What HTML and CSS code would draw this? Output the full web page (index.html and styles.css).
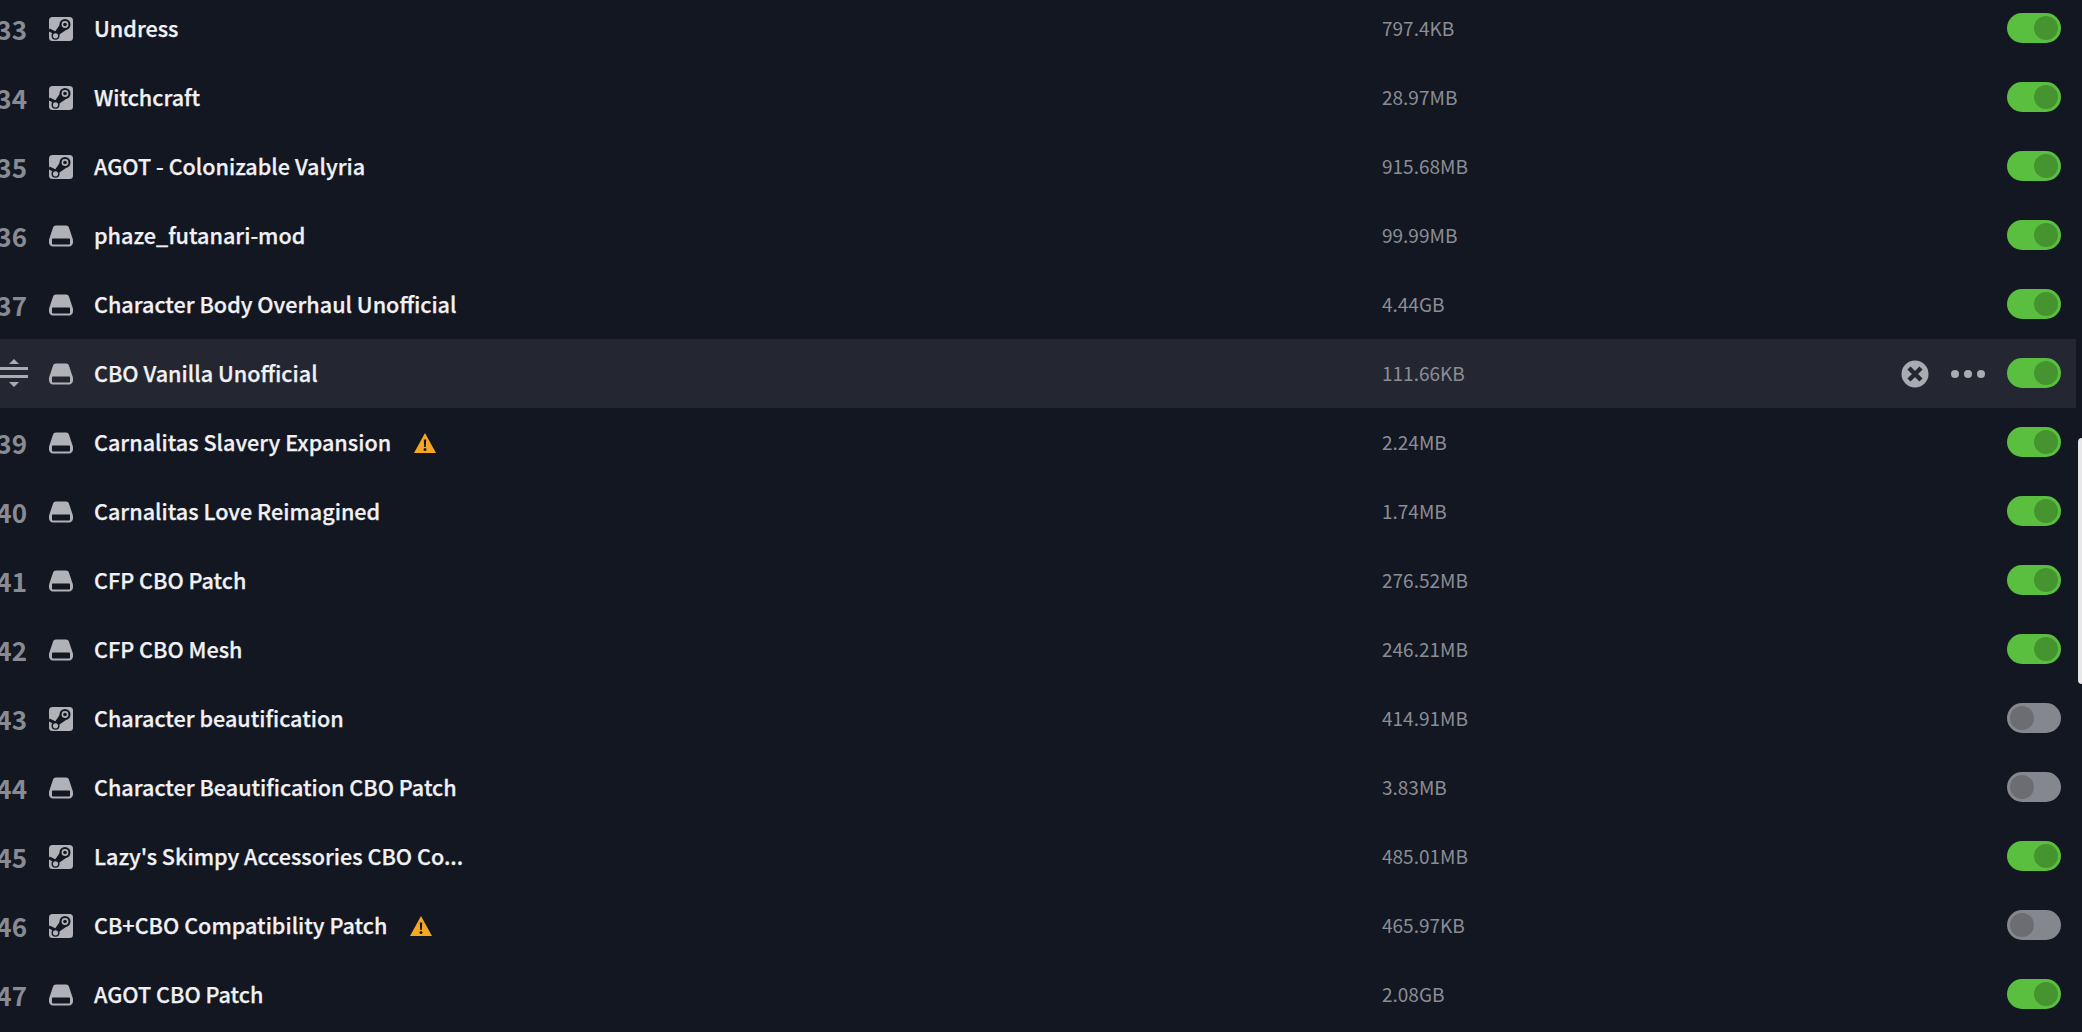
FILE: index.html
```html
<!DOCTYPE html>
<html lang="en">
<head>
  <meta charset="UTF-8" />
  <title>Mod list</title>
  <link rel="stylesheet" href="styles.css">
</head>
<body>
  <svg class="defs" width="0" height="0">
    <mask id="steam-cut" maskUnits="userSpaceOnUse" x="0" y="0" width="24" height="24">
      <rect width="24" height="24" fill="#fff"/>
      <path d="M0 12.800l6 3" fill="none" stroke="#000" stroke-width="3"/>
      <path d="M12 6l5 7-8 5.500-3.500-3z" fill="#000"/>
      <circle cx="16" cy="7.500" r="5.500" fill="#000"/>
      <circle cx="16" cy="7.500" r="3.400" fill="#fff"/>
      <circle cx="16" cy="7.500" r="1.800" fill="#000"/>
      <circle cx="6.500" cy="18.800" r="4" fill="#000"/>
      <circle cx="6.500" cy="18.800" r="2.600" fill="#fff"/>
    </mask>
    <symbol id="steam" viewBox="0 0 24 24">
      <rect width="24" height="24" rx="3.500" mask="url(#steam-cut)"/>
    </symbol>
    <symbol id="drive" viewBox="0 0 24 21">
      <path fill-rule="evenodd" d="M7 0h10c1.400 0 2.600.9 3 2.200l3.700 11c.2.600.3 1.200.3 1.800v2c0 2.200-1.800 4-4 4H4c-2.200 0-4-1.800-4-4v-2c0-.6.1-1.200.3-1.800L4 2.200C4.400.9 5.600 0 7 0zM4 13c-.6 0-1 .4-1 1v4c0 .6.4 1 1 1h16c.6 0 1-.4 1-1v-4c0-.6-.4-1-1-1z"/>
    </symbol>
    <symbol id="warn" viewBox="0 0 22 20">
      <path fill-rule="evenodd" d="M11 0l11 20H0zM9.800 6.500l.4 7.500h1.600l.4-7.500zM11 15a1.500 1.500 0 1 0 0 3 1.500 1.500 0 0 0 0-3z"/>
    </symbol>
  </svg>

  <div class="list">
    <div class="row"><span class="num">33</span><svg class="src"><use href="#steam"/></svg><span class="name">Undress</span><span class="size">797.4KB</span><span class="toggle on"></span></div>
    <div class="row"><span class="num">34</span><svg class="src"><use href="#steam"/></svg><span class="name">Witchcraft</span><span class="size">28.97MB</span><span class="toggle on"></span></div>
    <div class="row"><span class="num">35</span><svg class="src"><use href="#steam"/></svg><span class="name">AGOT - Colonizable Valyria</span><span class="size">915.68MB</span><span class="toggle on"></span></div>
    <div class="row"><span class="num">36</span><svg class="src"><use href="#drive"/></svg><span class="name">phaze_futanari-mod</span><span class="size">99.99MB</span><span class="toggle on"></span></div>
    <div class="row"><span class="num">37</span><svg class="src"><use href="#drive"/></svg><span class="name">Character Body Overhaul Unofficial</span><span class="size">4.44GB</span><span class="toggle on"></span></div>
    <div class="row hover">
      <span class="num">
        <svg class="drag" viewBox="0 0 28 28">
          <path d="M14 0l5 5H9zM14 28l-5-5h10z"/>
          <rect y="8" width="28" height="3"/>
          <rect y="16" width="28" height="3"/>
        </svg>
      </span>
      <svg class="src"><use href="#drive"/></svg><span class="name">CBO Vanilla Unofficial</span><span class="size">111.66KB</span>
      <span class="actions">
        <svg class="remove" viewBox="0 0 28 28">
          <circle cx="14" cy="14" r="13.500"/>
          <path class="x" d="M8 8l12 12M20 8L8 20"/>
        </svg>
        <span class="more"><i></i><i></i><i></i></span>
      </span>
      <span class="toggle on"></span>
    </div>
    <div class="row"><span class="num">39</span><svg class="src"><use href="#drive"/></svg><span class="name">Carnalitas Slavery Expansion</span><svg class="warn"><use href="#warn"/></svg><span class="size">2.24MB</span><span class="toggle on"></span></div>
    <div class="row"><span class="num">40</span><svg class="src"><use href="#drive"/></svg><span class="name">Carnalitas Love Reimagined</span><span class="size">1.74MB</span><span class="toggle on"></span></div>
    <div class="row"><span class="num">41</span><svg class="src"><use href="#drive"/></svg><span class="name">CFP CBO Patch</span><span class="size">276.52MB</span><span class="toggle on"></span></div>
    <div class="row"><span class="num">42</span><svg class="src"><use href="#drive"/></svg><span class="name">CFP CBO Mesh</span><span class="size">246.21MB</span><span class="toggle on"></span></div>
    <div class="row"><span class="num">43</span><svg class="src"><use href="#steam"/></svg><span class="name">Character beautification</span><span class="size">414.91MB</span><span class="toggle"></span></div>
    <div class="row"><span class="num">44</span><svg class="src"><use href="#drive"/></svg><span class="name">Character Beautification CBO Patch</span><span class="size">3.83MB</span><span class="toggle"></span></div>
    <div class="row"><span class="num">45</span><svg class="src"><use href="#steam"/></svg><span class="name">Lazy's Skimpy Accessories CBO Co...</span><span class="size">485.01MB</span><span class="toggle on"></span></div>
    <div class="row"><span class="num">46</span><svg class="src"><use href="#steam"/></svg><span class="name">CB+CBO Compatibility Patch</span><svg class="warn"><use href="#warn"/></svg><span class="size">465.97KB</span><span class="toggle"></span></div>
    <div class="row"><span class="num">47</span><svg class="src"><use href="#drive"/></svg><span class="name">AGOT CBO Patch</span><span class="size">2.08GB</span><span class="toggle on"></span></div>
  </div>

  <div class="scrollbar"></div>
</body>
</html>
```

FILE: styles.css
```css
html, body {
  height: 100%;
}
body {
  margin: 0;
  overflow: hidden;
  background-color: #131722;
  font-family: "Noto Sans CJK SC", "Noto Sans", sans-serif;
}
.defs {
  position: absolute;
}
.list {
  margin-top: -6px;
  margin-right: 6px;
}
.row {
  display: flex;
  align-items: center;
  height: 69px;
  position: relative;
}
.row.hover {
  background-color: #242732;
}
.num {
  width: 27px;
  flex: none;
  display: flex;
  justify-content: flex-end;
  margin-bottom: 1px;
  font-size: 26px;
  font-weight: 700;
  color: #898b93;
  white-space: nowrap;
}
.drag {
  width: 28px;
  height: 28px;
  flex: none;
  margin-right: -1px;
  fill: #a9abb2;
}
.src {
  width: 24px;
  height: 24px;
  flex: none;
  margin-left: 22px;
  fill: #b1b2b8;
}
.name {
  margin-left: 21px;
  margin-bottom: 3px;
  font-size: 21.6px;
  font-weight: 500;
  -webkit-text-stroke: 0.25px #f1f1f3;
  color: #f1f1f3;
  white-space: nowrap;
}
.warn {
  width: 22px;
  height: 20px;
  margin-left: 23px;
  fill: #f5a623;
}
.size {
  position: absolute;
  left: 1382px;
  margin-bottom: 2px;
  font-size: 19px;
  color: #8b8d94;
}
.actions {
  position: absolute;
  right: 91px;
  display: flex;
  align-items: center;
  gap: 22px;
}
.remove {
  width: 28px;
  height: 28px;
}
.remove circle {
  fill: #a9abb2;
}
.remove .x {
  stroke: #242732;
  stroke-width: 4.500;
  fill: none;
}
.more {
  display: flex;
  gap: 5px;
}
.more i {
  width: 8px;
  height: 8px;
  border-radius: 50%;
  background-color: #a9abb2;
}
.toggle {
  position: absolute;
  right: 15px;
  width: 54px;
  height: 30px;
  margin-bottom: 1px;
  border-radius: 15px;
  background-color: #85878f;
}
.toggle::after {
  content: "";
  position: absolute;
  top: 3px;
  left: 3px;
  width: 24px;
  height: 24px;
  border-radius: 50%;
  background-color: #6c6d72;
}
.toggle.on {
  background-color: #5abf3f;
}
.toggle.on::after {
  left: auto;
  right: 3px;
  background-color: #469430;
}
.scrollbar {
  position: absolute;
  right: 0;
  top: 438px;
  width: 4px;
  height: 246px;
  border-radius: 4px 0 0 4px;
  background-color: #e8e8ea;
}
```
